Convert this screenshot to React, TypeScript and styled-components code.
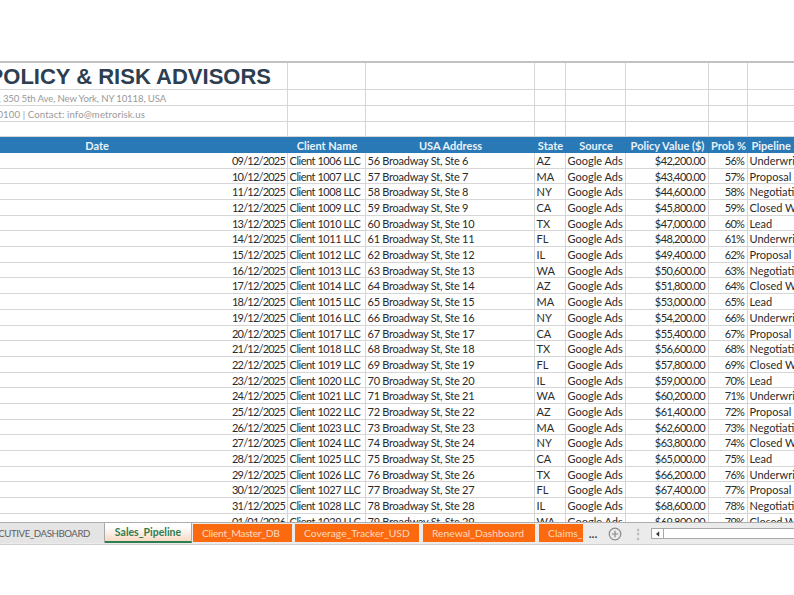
import React from "react";
import styled, { createGlobalStyle } from "styled-components";

const Global = createGlobalStyle`
  html, body { margin: 0; padding: 0; background: #fff; }
  body { width: 794px; height: 595px; overflow: hidden; font-family: "Lato", "Liberation Sans", sans-serif; }
`;

const COLS = "288px 78px 169px 31px 60px 83px 39px 76px";

const Page = styled.div`
  width: 794px;
  height: 595px;
  padding-top: 61px;
  box-sizing: border-box;
  display: flex;
  flex-direction: column;
  overflow: hidden;
`;

const Sheet = styled.div`
  width: 794px;
  height: 484px;
  display: flex;
  flex-direction: column;
  border-top: 2px solid #c2c2c2;
  box-sizing: border-box;
  overflow: hidden;
  background: #fff;
`;

const Viewport = styled.div`
  flex: 1;
  min-height: 0;
  overflow: hidden;
`;

const Row = styled.div<{ $h: number }>`
  display: grid;
  grid-template-columns: ${COLS};
  width: 824px;
  height: ${(p) => p.$h}px;
  box-sizing: border-box;
`;

const BlankCell = styled.div`
  border-right: 1px solid #d6d6d6;
  border-bottom: 1px solid #d6d6d6;
`;

const BrandCell = styled.div<{ $pad: number }>`
  border-right: 1px solid #d6d6d6;
  border-bottom: 1px solid #d6d6d6;
  display: flex;
  justify-content: flex-end;
  align-items: center;
  overflow: hidden;
  white-space: nowrap;
  padding-right: ${(p) => p.$pad}px;
  padding-top: 2px;
  box-sizing: border-box;
`;

const Title = styled.span`
  font-family: "Liberation Sans", Arial, sans-serif;
  font-weight: 700;
  font-size: 22px;
  color: #2c3e50;
  flex: none;
`;

const Sub = styled.span<{ $track: number }>`
  font-size: 9.6px;
  letter-spacing: ${(p) => p.$track}px;
  color: #999;
  flex: none;
`;

const HeadCell = styled.div<{ $shift?: number }>`
  background: #2879b5;
  color: #e8f2f9;
  font-weight: 700;
  font-size: 11px;
  display: flex;
  align-items: center;
  justify-content: center;
  white-space: nowrap;
  padding-top: 1px;
  padding-right: ${(p) => p.$shift ?? 0}px;
  box-sizing: border-box;
`;

const Cell = styled.div<{ $align?: "left" | "right"; $track?: number; $end?: number }>`
  border-right: 1px solid #d6d6d6;
  border-bottom: 1px solid #d6d6d6;
  color: #2b2b2b;
  font-size: 11px;
  line-height: 16.5px;
  padding: 0 ${(p) => p.$end ?? 2}px 0 1.5px;
  letter-spacing: ${(p) => p.$track ?? 0}px;
  text-align: ${(p) => p.$align ?? "left"};
  white-space: nowrap;
  overflow: hidden;
`;

const TabBar = styled.div`
  height: 23px;
  flex: none;
  background: #ebebeb;
  border-top: 1px solid #aeaeae;
  border-bottom: 1px solid #d0d0d0;
  box-sizing: border-box;
  display: flex;
  align-items: flex-start;
  overflow: hidden;
  font-size: 10.3px;
  white-space: nowrap;
`;

const GreyTab = styled.div`
  width: 105px;
  flex: none;
  height: 20px;
  display: flex;
  justify-content: flex-end;
  align-items: center;
  overflow: hidden;
  padding-right: 14px;
  box-sizing: border-box;
  color: #606060;
  background: #e4e4e4;
  border-right: 1px solid #a8a8a8;
  font-size: 9.7px;
  letter-spacing: -0.45px;
`;

const GreyLabel = styled.span`
  flex: none;
`;

const ActiveTab = styled.div`
  flex: none;
  width: 87px;
  height: 20px;
  box-sizing: border-box;
  background: linear-gradient(#fff 20%, #f9d9c2);
  border-bottom: 2px solid #2f7d4f;
  color: #2e7d4f;
  font-weight: 700;
  font-size: 10.5px;
  display: flex;
  align-items: center;
  justify-content: center;
  border-right: 1px solid #a8a8a8;
`;

const OrangeTab = styled.div<{ $w: number; $gap: number; $track?: number }>`
  flex: none;
  width: ${(p) => p.$w}px;
  height: 18px;
  margin: 1px 0 0 ${(p) => p.$gap}px;
  padding-left: 9px;
  background: #fb6a0f;
  color: #fbd9c0;
  letter-spacing: ${(p) => p.$track ?? 0}px;
  display: flex;
  align-items: center;
  overflow: hidden;
  box-sizing: border-box;
`;

const Controls = styled.div`
  flex: none;
  height: 21px;
  display: flex;
  align-items: center;
  color: #666;
`;

const Ellipsis = styled.span`
  width: 20px;
  text-align: center;
  font-weight: 700;
  color: #444;
  font-size: 12px;
`;

const AddIcon = styled.svg`
  margin-left: 5px;
  flex: none;
`;

const Dots = styled.span`
  width: 29px;
  padding-left: 3px;
  box-sizing: border-box;
  text-align: center;
  color: #b5b5b5;
  font-size: 12px;
  font-weight: 700;
`;

const Scroll = styled.div`
  flex: none;
  display: flex;
  height: 11px;
  width: 200px;
  background: #fff;
  border: 1px solid #a8a8a8;
  box-sizing: border-box;
`;

const ScrollBtn = styled.div`
  width: 11px;
  border-right: 1px solid #a8a8a8;
  display: flex;
  align-items: center;
  justify-content: center;
`;

const states = ["AZ", "MA", "NY", "CA", "TX", "FL", "IL", "WA"];
const stages = ["Underwriting", "Proposal", "Negotiation", "Closed Won", "Lead"];

const dates = [
  "09/12/2025", "10/12/2025", "11/12/2025", "12/12/2025", "13/12/2025", "14/12/2025",
  "15/12/2025", "16/12/2025", "17/12/2025", "18/12/2025", "19/12/2025", "20/12/2025",
  "21/12/2025", "22/12/2025", "23/12/2025", "24/12/2025", "25/12/2025", "26/12/2025",
  "27/12/2025", "28/12/2025", "29/12/2025", "30/12/2025", "31/12/2025", "01/01/2026",
];

const rows = dates.map((date, i) => ({
  date,
  client: `Client ${1006 + i} LLC`,
  address: `${56 + i} Broadway St, Ste ${6 + i}`,
  state: states[i % 8],
  value: `$${(42200 + i * 1200).toLocaleString("en-US")}.00`,
  prob: `${56 + i}%`,
  stage: stages[i % 5],
}));

const headers = ["Client Name", "USA Address", "State", "Source", "Policy Value ($)", "Prob %", "Pipeline Stage"];

const Blanks = ({ n }: { n: number }) => (
  <>
    {Array.from({ length: n }, (_, i) => (
      <BlankCell key={i} />
    ))}
  </>
);

export default function App() {
  return (
    <Page>
      <Global />
      <Sheet>
        <Viewport>
          <Row $h={27}>
            <BrandCell $pad={16}>
              <Title>METRO POLICY &amp; RISK ADVISORS</Title>
            </BrandCell>
            <Blanks n={7} />
          </Row>
          <Row $h={16}>
            <BrandCell $pad={121}>
              <Sub $track={-0.13}>Metro Tower, 350 5th Ave, New York, NY 10118, USA</Sub>
            </BrandCell>
            <Blanks n={7} />
          </Row>
          <Row $h={15.7}>
            <BrandCell $pad={142}>
              <Sub $track={0.12}>Tel: +1 212 555 0100 | Contact: info@metrorisk.us</Sub>
            </BrandCell>
            <Blanks n={7} />
          </Row>
          <Row $h={15.3}>
            <Blanks n={8} />
          </Row>
          <Row $h={16}>
            <HeadCell $shift={94}>Date</HeadCell>
            {headers.map((h) => (
              <HeadCell key={h}>{h}</HeadCell>
            ))}
          </Row>
          {rows.map((r) => (
            <Row $h={15.7} key={r.date}>
              <Cell $align="right" $track={-0.8}>{r.date}</Cell>
              <Cell $track={-0.47}>{r.client}</Cell>
              <Cell $track={-0.25}>{r.address}</Cell>
              <Cell>{r.state}</Cell>
              <Cell>Google Ads</Cell>
              <Cell $align="right" $track={-0.6} $end={3}>{r.value}</Cell>
              <Cell $align="right" $track={-0.8} $end={3}>{r.prob}</Cell>
              <Cell>{r.stage}</Cell>
            </Row>
          ))}
        </Viewport>
        <TabBar>
          <GreyTab>
            <GreyLabel>EXECUTIVE_DASHBOARD</GreyLabel>
          </GreyTab>
          <ActiveTab>Sales_Pipeline</ActiveTab>
          <OrangeTab $w={99} $gap={1} $track={-0.3}>Client_Master_DB</OrangeTab>
          <OrangeTab $w={124} $gap={3}>Coverage_Tracker_USD</OrangeTab>
          <OrangeTab $w={112} $gap={4}>Renewal_Dashboard</OrangeTab>
          <OrangeTab $w={44} $gap={4}>Claims_</OrangeTab>
          <Controls>
            <Ellipsis>...</Ellipsis>
            <AddIcon width="14" height="14" viewBox="0 0 14 14" fill="none" stroke="#8a8a8a" strokeWidth="1.2">
              <circle cx="7" cy="7" r="5.8" />
              <path d="M7 3.8v6.4M3.8 7h6.4" />
            </AddIcon>
            <Dots>⋮</Dots>
            <Scroll>
              <ScrollBtn>
                <svg width="4" height="6" viewBox="0 0 5 7">
                  <path d="M4 0v7L0 3.5z" fill="#333" />
                </svg>
              </ScrollBtn>
            </Scroll>
          </Controls>
        </TabBar>
      </Sheet>
    </Page>
  );
}
